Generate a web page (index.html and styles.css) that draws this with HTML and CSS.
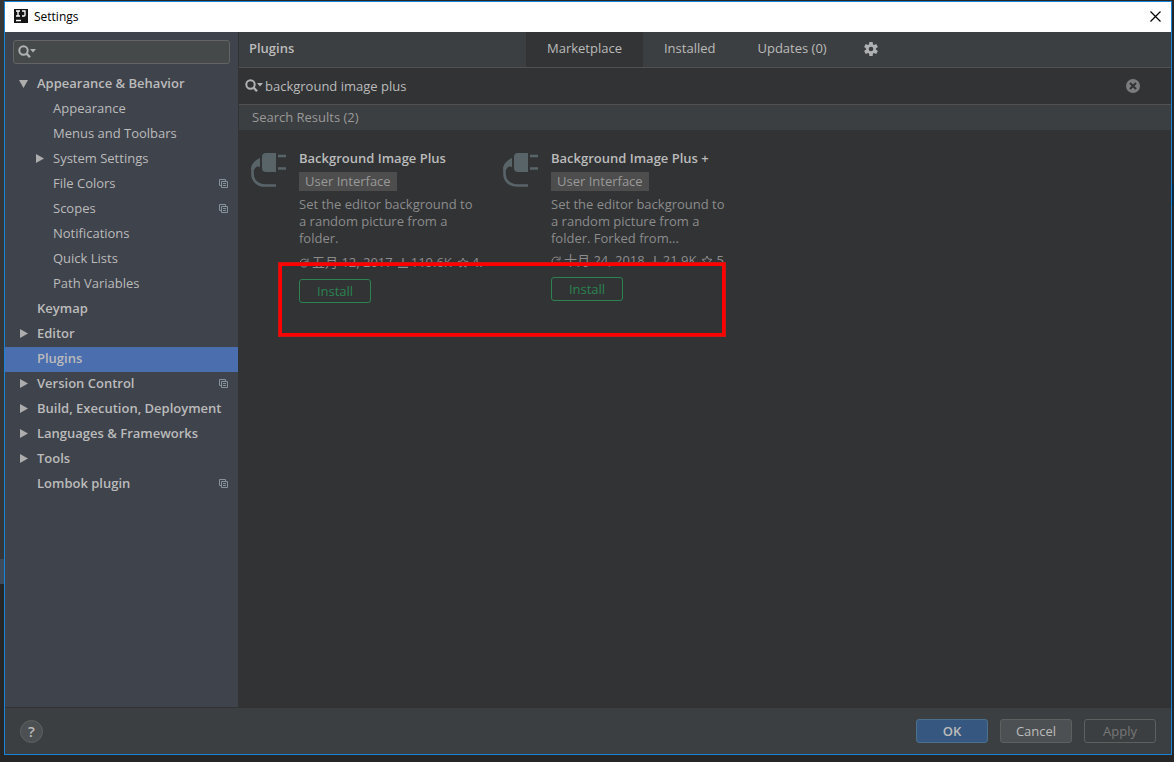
FILE: index.html
```
<!DOCTYPE html>
<html lang="en">
<head>
<meta charset="utf-8">
<title>Settings</title>
<link rel="stylesheet" href="styles.css">
</head>
<body>
<svg class="sprite" aria-hidden="true">
  <symbol id="search" viewBox="0 0 18 14"><circle cx="5.5" cy="5.5" r="4.2" fill="none" stroke="currentColor" stroke-width="2"/><path d="M8.5 8.5l3.5 3.7" stroke="currentColor" stroke-width="2.4"/><path d="M12 4h6l-3 3.5z" fill="currentColor"/></symbol>
  <symbol id="copy" viewBox="0 0 9 9"><path d="M2 6.5H.5v-6h6V2M2.5 2.5h6v6h-6zM4 4.5h3M4 6.5h3" fill="none" stroke="currentColor"/></symbol>
  <symbol id="right" viewBox="0 0 8 9"><path d="M0 0l8 4.5L0 9z" fill="currentColor"/></symbol>
  <symbol id="down" viewBox="0 0 9 8"><path d="M0 0h9L4.5 8z" fill="currentColor"/></symbol>
  <symbol id="plug" viewBox="0 0 36 36"><path d="M15 1h10v19H15q-4 0-4-4V5q0-4 4-4z" fill="currentColor"/><path d="M27 4h8M27 16.5h8M25 33.5H14C6 33.5 1.5 28 1.5 22v-4q0-4 3-7" fill="none" stroke="currentColor" stroke-width="2.6"/><path d="M0 18q0-8 9-12v9q-4-2-6 3z" fill="currentColor"/></symbol>
  <symbol id="refresh" viewBox="0 0 10 10"><path d="M8.8 6.5A4 4 0 1 1 7.8 2.2M9 .5v3.3H5.5" fill="none" stroke="currentColor"/></symbol>
  <symbol id="download" viewBox="0 0 10 10"><path d="M5 0v7M2.5 4.7L5 7.2l2.5-2.5M0 9.3h10" fill="none" stroke="currentColor" stroke-width="1.3"/></symbol>
  <symbol id="arrow" viewBox="0 0 8 10"><path d="M4 0v9M1 6l3 3 3-3" fill="none" stroke="currentColor" stroke-width="1.3"/></symbol>
  <symbol id="star" viewBox="0 0 12 11"><path d="M6 1l1.4 3.1 3.6.3-2.7 2.3.8 3.4L6 8.3l-3.1 1.8.8-3.4L1 4.4l3.6-.3z" fill="none" stroke="currentColor"/></symbol>
</svg>
<main class="window">
  <header class="titlebar">
    <svg class="logo" viewBox="0 0 14 14"><path fill="#151515" d="M0 0h14v14H0z"/><path d="M2 2h4M4 2v5M2 7h4M8 2h3v4q0 1-1 1H8M2 11.5h5" fill="none" stroke="#fff" stroke-width="1.3"/></svg>
    <h1 class="window-title">Settings</h1>
    <button class="close" aria-label="Close"><svg viewBox="0 0 11 11"><path d="M.5.5l10 10M10.5.5l-10 10" stroke="#000" stroke-width="1.2"/></svg></button>
  </header>
  <div class="workspace">
    <aside class="sidebar">
      <label class="side-search"><svg class="search-icon"><use href="#search"/></svg><input type="text" aria-label="Search settings"></label>
      <nav class="tree">
        <a href="#" class="row group"><svg class="twist open"><use href="#down"/></svg><span>Appearance &amp; Behavior</span></a>
        <a href="#" class="row child"><span>Appearance</span></a>
        <a href="#" class="row child"><span>Menus and Toolbars</span></a>
        <a href="#" class="row child"><svg class="twist"><use href="#right"/></svg><span>System Settings</span></a>
        <a href="#" class="row child"><span>File Colors</span><svg class="copy"><use href="#copy"/></svg></a>
        <a href="#" class="row child"><span>Scopes</span><svg class="copy"><use href="#copy"/></svg></a>
        <a href="#" class="row child"><span>Notifications</span></a>
        <a href="#" class="row child"><span>Quick Lists</span></a>
        <a href="#" class="row child"><span>Path Variables</span></a>
        <a href="#" class="row group"><span>Keymap</span></a>
        <a href="#" class="row group"><svg class="twist"><use href="#right"/></svg><span>Editor</span></a>
        <a href="#" class="row group selected" aria-current="page"><span>Plugins</span></a>
        <a href="#" class="row group"><svg class="twist"><use href="#right"/></svg><span>Version Control</span><svg class="copy"><use href="#copy"/></svg></a>
        <a href="#" class="row group"><svg class="twist"><use href="#right"/></svg><span>Build, Execution, Deployment</span></a>
        <a href="#" class="row group"><svg class="twist"><use href="#right"/></svg><span>Languages &amp; Frameworks</span></a>
        <a href="#" class="row group"><svg class="twist"><use href="#right"/></svg><span>Tools</span></a>
        <a href="#" class="row group"><span>Lombok plugin</span><svg class="copy"><use href="#copy"/></svg></a>
      </nav>
    </aside>
    <section class="content">
      <header class="tabs">
        <h2 class="page-title">Plugins</h2>
        <button class="tab active">Marketplace</button>
        <button class="tab">Installed</button>
        <button class="tab">Updates (0)</button>
        <button class="gear" aria-label="Plugin settings"><svg viewBox="0 0 14 14"><g fill="currentColor"><circle cx="7" cy="7" r="5"/><path id="tooth" d="M5.4 0h3.2l.5 3H4.9zM5.4 14h3.2l.5-3H4.9z"/><use href="#tooth" transform="rotate(60 7 7)"/><use href="#tooth" transform="rotate(120 7 7)"/></g><circle cx="7" cy="7" r="2.3" fill="#3c3f41"/></svg></button>
      </header>
      <div class="query">
        <svg class="search-icon"><use href="#search"/></svg>
        <input type="text" value="background image plus" aria-label="Search plugins">
        <button class="clear" aria-label="Clear search"><svg viewBox="0 0 14 14"><circle cx="7" cy="7" r="7" fill="#7a7c7e"/><path d="M4 4l6 6M10 4l-6 6" stroke="#313335" stroke-width="2"/></svg></button>
      </div>
      <h3 class="count">Search Results (2)</h3>
      <div class="results">
        <article class="card">
          <svg class="plug"><use href="#plug"/></svg>
          <div class="info">
            <h4 class="name">Background Image Plus</h4>
            <span class="tag">User Interface</span>
            <p class="desc">Set the editor background to a random picture from a folder.</p>
            <div class="meta tall"><svg class="mini"><use href="#refresh"/></svg><span class="stat">五月 12, 2017</span><svg class="mini"><use href="#download"/></svg><span class="stat">119.6K</span><svg class="mini star"><use href="#star"/></svg><span>4.</span></div>
            <button class="install">Install</button>
          </div>
        </article>
        <article class="card">
          <svg class="plug"><use href="#plug"/></svg>
          <div class="info">
            <h4 class="name">Background Image Plus +</h4>
            <span class="tag">User Interface</span>
            <p class="desc">Set the editor background to a random picture from a folder. Forked from...</p>
            <div class="meta"><svg class="mini"><use href="#refresh"/></svg><span class="stat">十月 24, 2018</span><svg class="mini"><use href="#arrow"/></svg><span class="stat">21.9K</span><svg class="mini star"><use href="#star"/></svg><span>5</span></div>
            <button class="install">Install</button>
          </div>
        </article>
        <div class="highlight"></div>
      </div>
    </section>
  </div>
  <footer class="footer">
    <button class="help" aria-label="Help">?</button>
    <button class="btn primary">OK</button>
    <button class="btn">Cancel</button>
    <button class="btn off" disabled>Apply</button>
  </footer>
</main>
</body>
</html>
```
FILE: styles.css
```
* { box-sizing: border-box; }
body {
  margin: 0;
  min-height: 100vh;
  display: flex;
  padding: 1px 2px 7px 4px;
  color: #bbbbbb;
  font: 13px/17px "Open Sans", "Noto Sans CJK SC", sans-serif;
  background:
    linear-gradient(#3d4b5c, #3d4b5c) 0 559px / 4px 25px no-repeat,
    linear-gradient(#0d293e, #0d293e) 100% 184px / 2px 21px no-repeat,
    linear-gradient(#343638, #343638) 0 0 / 4px 559px no-repeat,
    #262626;
}
button, input { font: inherit; color: inherit; border: 0; padding: 0; background: none; }
input { outline: 0; min-width: 0; flex: 1; }
h1, h2, h3, h4, p { margin: 0; font-size: 13px; font-weight: 400; }
a { color: inherit; text-decoration: none; }
svg { display: block; flex: none; }
.sprite { position: absolute; width: 0; height: 0; }

.window { flex: 1; display: flex; flex-direction: column; border: 1px solid #1883d7; background: #3c3f41; }
.titlebar { height: 30px; display: flex; align-items: center; gap: 6px; padding: 0 9px 2px; background: #fff; color: #000; }
.logo { width: 14px; height: 14px; }
.window-title { flex: 1; font-size: 12px; }
.close { padding: 1px; }
.close svg { width: 11px; height: 11px; }

.workspace { flex: 1; display: flex; border-bottom: 1px solid #323232; }
.sidebar { width: 233px; background: #3f434c; }
.side-search { display: flex; align-items: center; height: 24px; margin: 8px; padding: 0 4px; border: 1px solid #646464; border-radius: 3px; background: #45494a; }
.search-icon { width: 18px; height: 14px; color: #afb1b3; }
.row { display: flex; align-items: center; height: 25px; padding: 0 10px 2px 32px; }
.row.child { padding-left: 48px; }
.row.group { font-weight: 600; }
.row.selected { background: #4b6eaf; }
.row span { flex: 1; white-space: nowrap; }
.twist { width: 8px; height: 9px; margin: 0 9px 0 -17px; color: #adadad; }
.twist.open { width: 9px; height: 8px; margin: 0 9px 0 -18px; }
.copy { width: 9px; height: 9px; color: #87919b; }

.content { flex: 1; display: flex; flex-direction: column; border-left: 1px solid #313335; background: #313335; }
.tabs { display: flex; height: 36px; border-bottom: 1px solid #515151; background: #3c3f41; }
.page-title { width: 287px; padding: 8px 10px; font-weight: 600; }
.tab { padding: 0 21px 2px; }
.tab.active { background: #323435; }
.gear { padding: 0 16px 2px; color: #afb1b3; }
.gear svg { width: 14px; height: 14px; }
.query { display: flex; align-items: center; gap: 2px; height: 37px; padding: 0 31px 0 6px; border-bottom: 1px solid #515151; }
.clear svg { width: 14px; height: 14px; }
.count { height: 25px; padding: 4px 13px; background: #3c3f41; color: #999999; }
.results { position: relative; flex: 1; display: grid; grid-template-columns: 252px 252px; align-content: start; padding: 20px 12px; }
.card { display: flex; gap: 12px; }
.plug { width: 36px; height: 36px; margin-top: 2px; color: #596469; }
.info { width: 184px; display: flex; flex-direction: column; align-items: flex-start; color: #8c8c8c; }
.name { font-weight: 600; color: #bbbbbb; }
.tag { height: 19px; margin: 5px 0; padding: 1px 6px; background: #4d4d4d; color: #999999; }
.meta { height: 19px; margin: 4px 0 7px; display: flex; align-items: center; white-space: nowrap; gap: 3px; }
.meta.tall { height: 21px; padding-top: 2px; }
.mini { width: 10px; height: 10px; }
.mini.star { width: 12px; height: 11px; }
.stat { margin-right: 2px; }
.install { width: 72px; height: 24px; border: 1px solid #2c8351; border-radius: 3px; color: #2c8351; }
.highlight { position: absolute; left: 40px; top: 133px; width: 446px; height: 73px; border: 3px solid #ff0000; outline: 1px solid #cc1616; }

.footer { display: flex; align-items: center; gap: 12px; height: 46px; padding: 0 15px; }
.help { width: 23px; height: 23px; margin-right: auto; border: 1px solid #5e6162; border-radius: 50%; background: #4c5052; font-size: 15px; font-weight: 600; }
.btn { width: 72px; height: 24px; border: 1px solid #5e6060; border-radius: 3px; background: #4c5052; }
.btn.primary { border-color: #4c708c; background: #365880; font-weight: 600; }
.btn.off { background: none; color: #777777; }
```
